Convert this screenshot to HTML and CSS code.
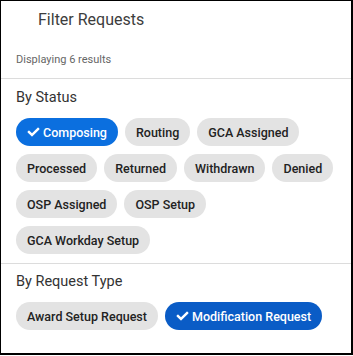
FILE: index.html
```html
<!DOCTYPE html>
<html>
<head>
<meta charset="utf-8">
<link rel="stylesheet" href="styles.css">
</head>
<body>
<div class="panel">
  <div class="header">
    <div class="title">Filter Requests</div>
    <div class="count">Displaying 6 results</div>
  </div>
  <div class="section section-status">
    <div class="label">By Status</div>
    <div class="chips">
      <span class="chip selected"><svg class="check" viewBox="0 0 512 512"><path d="M173.898 439.404l-166.4-166.4c-9.997-9.997-9.997-26.206 0-36.204l36.203-36.204c9.997-9.998 26.207-9.998 36.204 0L192 312.69 432.095 72.596c9.997-9.997 26.207-9.997 36.204 0l36.203 36.204c9.997 9.997 9.997 26.206 0 36.204l-294.4 294.401c-9.998 9.997-26.207 9.997-36.204-.001z"/></svg>Composing</span>
      <span class="chip">Routing</span>
      <span class="chip">GCA Assigned</span>
      <span class="chip">Processed</span>
      <span class="chip">Returned</span>
      <span class="chip">Withdrawn</span>
      <span class="chip">Denied</span>
      <span class="chip">OSP Assigned</span>
      <span class="chip">OSP Setup</span>
      <span class="chip">GCA Workday Setup</span>
    </div>
  </div>
  <div class="section section-type">
    <div class="label">By Request Type</div>
    <div class="chips">
      <span class="chip">Award Setup Request</span>
      <span class="chip selected dark"><svg class="check" viewBox="0 0 512 512"><path d="M173.898 439.404l-166.4-166.4c-9.997-9.997-9.997-26.206 0-36.204l36.203-36.204c9.997-9.998 26.207-9.998 36.204 0L192 312.69 432.095 72.596c9.997-9.997 26.207-9.997 36.204 0l36.203 36.204c9.997 9.997 9.997 26.206 0 36.204l-294.4 294.401c-9.998 9.997-26.207 9.997-36.204-.001z"/></svg>Modification Request</span>
    </div>
  </div>
</div>
</body>
</html>
```
FILE: styles.css
```css
html, body {
  margin: 0;
  padding: 0;
  background: #fff;
}
body {
  font-family: Roboto, "Liberation Sans", sans-serif;
}
.panel {
  box-sizing: border-box;
  width: 353px;
  height: 355px;
  border-style: solid;
  border-color: #000;
  border-width: 1px 2px 2px 1px;
  background: #fff;
}
.header {
  padding: 9px 16px 11px 15px;
  border-bottom: 1px solid #dcdcdc;
}
.title {
  padding-left: 22px;
  font-size: 16px;
  line-height: 20px;
  color: #3d3d3d;
}
.count {
  margin-top: 23px;
  font-size: 11px;
  line-height: 14px;
  color: #666;
}
.section {
  padding: 10px 15px 9px 15px;
}
.section-status {
  border-bottom: 1px solid #dcdcdc;
}
.section-type {
  padding-top: 9px;
}
.label {
  font-size: 14.5px;
  line-height: 18px;
  color: #333;
}
.chips {
  margin-top: 11px;
  display: flex;
  flex-wrap: wrap;
  gap: 8px 7px;
}
.chip {
  display: inline-flex;
  align-items: center;
  height: 28px;
  box-sizing: border-box;
  padding: 0 11px;
  border-radius: 14px;
  background: #e3e3e3;
  color: #222;
  font-size: 12.5px;
  font-weight: 500;
}
.chip.selected {
  background: #0b6fdf;
  color: #fff;
}
.chip.selected.dark {
  background: #0a5cc6;
}
.check {
  width: 13px;
  height: 12px;
  fill: #fff;
  margin-right: 3px;
}
```
